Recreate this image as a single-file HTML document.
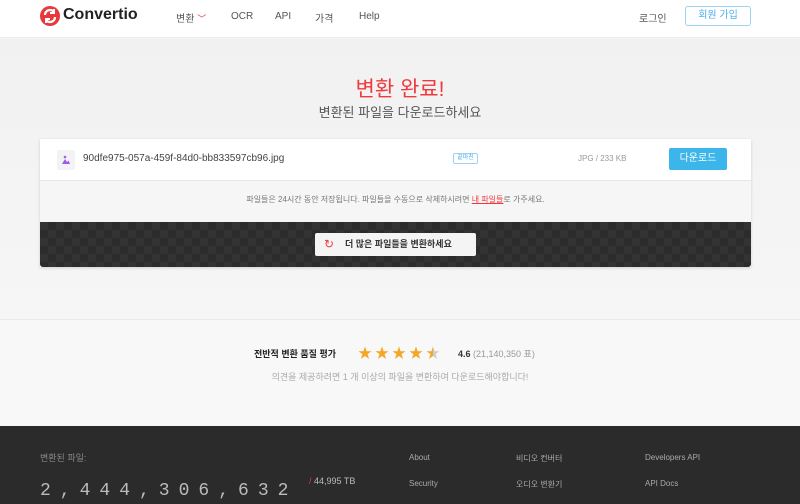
<!DOCTYPE html>
<html><head><meta charset="utf-8"><style>
*{margin:0;padding:0;box-sizing:border-box}
body{width:800px;height:504px;overflow:hidden;font-family:"Liberation Sans","Noto Sans CJK KR",sans-serif;background:#f4f4f4;position:relative;color:#333}
.hdr{position:absolute;left:0;top:0;width:800px;height:38px;background:#fff;border-bottom:1px solid #eee}
.abs{position:absolute;white-space:nowrap}
.main{position:absolute;left:0;top:39px;width:800px;height:280px;background:linear-gradient(#f1f1f1,#f6f6f6)}
.rate{position:absolute;left:0;top:319px;width:800px;height:107px;background:#f8f8f8;border-top:1px solid #eaeaea}
.foot{position:absolute;left:0;top:426px;width:800px;height:78px;background:#2b2b2b}
.card{position:absolute;left:40px;top:139px;width:711px;height:128px;box-shadow:0 1px 3px rgba(0,0,0,.15)}
.dark{position:absolute;left:40px;top:222px;width:711px;height:45px;background-color:#333;background-image:linear-gradient(45deg,#2c2c2c 25%,transparent 25%,transparent 75%,#2c2c2c 75%),linear-gradient(45deg,#2c2c2c 25%,transparent 25%,transparent 75%,#2c2c2c 75%);background-size:16px 16px;background-position:0 0,8px 8px;border-radius:0 0 3px 3px}
.star{color:#f5a623;font-size:14px;margin-right:3px}
</style></head><body>
<div class="hdr"></div>
<svg class="abs" style="left:40px;top:6px" width="20" height="20" viewBox="0 0 20 20"><circle cx="10" cy="10" r="10" fill="#e8383d"/><path d="M5 9a5 5 0 0 1 9-3M15 11a5 5 0 0 1-9 3" stroke="#fff" stroke-width="2.3" fill="none"/><path d="M14 3v4h-4M6 17v-4h4" stroke="#fff" stroke-width="2" fill="none"/></svg>
<div class="abs" style="left:63px;top:6px;font-size:16px;font-weight:bold;color:#222">Convertio</div>
<div class="abs" style="left:176px;top:10px;font-size:10px;color:#555">변환 <span style="color:#e8383d;font-size:9px">﹀</span></div>
<div class="abs" style="left:231px;top:11px;font-size:10px;color:#555">OCR</div>
<div class="abs" style="left:275px;top:11px;font-size:10px;color:#555">API</div>
<div class="abs" style="left:315px;top:10px;font-size:10px;color:#555">가격</div>
<div class="abs" style="left:359px;top:11px;font-size:10px;color:#555">Help</div>
<div class="abs" style="left:639px;top:10px;font-size:10px;color:#555">로그인</div>
<div class="abs" style="left:685px;top:6px;width:66px;height:20px;border:1px solid #9dd3f2;border-radius:3px;font-size:10px;color:#4aafe9;text-align:center;line-height:18px">회원 가입</div>
<div class="main"></div>
<div class="abs" style="left:0;width:800px;text-align:center;top:73px;font-size:21px;color:#f0393f">변환 완료!</div>
<div class="abs" style="left:0;width:800px;text-align:center;top:102px;font-size:13px;color:#555">변환된 파일을 다운로드하세요</div>
<div class="card">
<div style="height:42px;background:#fff;border-bottom:1px solid #e6e6e6;position:relative">
<div class="abs" style="left:17px;top:11px;width:18px;height:20px;background:#f3f3f5;border-radius:2px"><svg width="18" height="20"><path d="M5 14l3-5 2 3 1.5-1.5L13 14z" fill="#9b5de5"/><circle cx="8" cy="7" r="1.3" fill="#9b5de5"/></svg></div>
<div class="abs" style="left:43px;top:14px;font-size:10px;color:#444">90dfe975-057a-459f-84d0-bb833597cb96.jpg</div>
<div class="abs" style="left:413px;top:14px;width:25px;height:11px;border:1px solid #9dd3f2;border-radius:2px;font-size:6px;color:#4aafe9;text-align:center;line-height:9px">끝마친</div>
<div class="abs" style="left:538px;top:15px;font-size:8px;color:#999">JPG / 233 KB</div>
<div class="abs" style="left:629px;top:9px;width:58px;height:22px;background:#3bb5ea;border-radius:2px;color:#fff;font-size:10px;text-align:center;line-height:22px">다운로드</div>
</div>
<div style="height:41px;background:#f6f6f6;text-align:center;font-size:8px;color:#777;line-height:38px">파일들은 24시간 동안 저장됩니다. 파일들을 수동으로 삭제하시려면 <span style="color:#f0393f;text-decoration:underline">내 파일들</span>로 가주세요.</div>
</div>
<div class="dark"></div>
<div class="abs" style="left:315px;top:233px;width:161px;height:23px;background:#f4f4f4;border-radius:2px;font-size:9px;font-weight:bold;color:#333;line-height:23px;padding-left:30px">더 많은 파일들을 변환하세요</div>
<div class="abs" style="left:324px;top:237px;font-size:12px;color:#f0393f">↻</div>
<div class="rate"></div>
<div class="abs" style="left:254px;top:347px;font-size:9px;font-weight:bold;color:#222">전반적 변환 품질 평가</div>
<div class="abs" style="left:358px;top:343px"><span class="star">★</span><span class="star">★</span><span class="star">★</span><span class="star">★</span><span class="star" style="background:linear-gradient(90deg,#f5a623 50%,#ccc 50%);-webkit-background-clip:text;color:transparent">★</span></div>
<div class="abs" style="left:458px;top:347px;font-size:9px;font-weight:bold;color:#333">4.6 <span style="font-weight:normal;color:#999">(21,140,350 표)</span></div>
<div class="abs" style="left:0;width:800px;text-align:center;top:370px;font-size:9px;color:#aaa">의견을 제공하려면 1 개 이상의 파일을 변환하여 다운로드해야합니다!</div>
<div class="foot"></div>
<div class="abs" style="left:40px;top:451px;font-size:9px;color:#888">변환된 파일:</div>
<div class="abs" style="left:40px;top:481px;font-size:18px;color:#bbb;letter-spacing:9px;font-family:'Liberation Mono',monospace">2,444,306,632</div>
<div class="abs" style="left:309px;top:476px;font-size:9px;color:#bbb"><span style="color:#e8383d">/</span> 44,995 TB</div>
<div class="abs" style="left:409px;top:453px;font-size:8px;color:#aaa">About</div>
<div class="abs" style="left:409px;top:479px;font-size:8px;color:#aaa">Security</div>
<div class="abs" style="left:516px;top:453px;font-size:8px;color:#aaa">비디오 컨버터</div>
<div class="abs" style="left:516px;top:479px;font-size:8px;color:#aaa">오디오 변환기</div>
<div class="abs" style="left:645px;top:453px;font-size:8px;color:#aaa">Developers API</div>
<div class="abs" style="left:645px;top:479px;font-size:8px;color:#aaa">API Docs</div>
</body></html>
